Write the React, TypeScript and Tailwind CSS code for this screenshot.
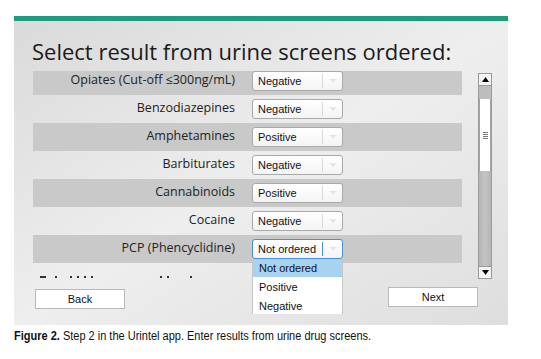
import React from "react";

const rows: { label: string; value: string; gray: boolean; active?: boolean }[] = [
  { label: "Opiates (Cut-off \u2264300ng/mL)", value: "Negative", gray: true },
  { label: "Benzodiazepines", value: "Negative", gray: false },
  { label: "Amphetamines", value: "Positive", gray: true },
  { label: "Barbiturates", value: "Negative", gray: false },
  { label: "Cannabinoids", value: "Positive", gray: true },
  { label: "Cocaine", value: "Negative", gray: false },
  { label: "PCP (Phencyclidine)", value: "Not ordered", gray: true, active: true },
];

function Select({ value, active }: { value: string; active?: boolean }) {
  return (
    <div
      className={
        "flex h-[20px] w-[91px] items-stretch rounded-[3px] border bg-gradient-to-b from-white to-[#f4f4f4] " +
        (active ? "border-[#4a8fd6]" : "border-[#a9a9a9]")
      }
    >
      <div className="flex flex-1 items-center pl-[5px] text-[11px] text-[#111] [font-family:'Liberation_Sans',Arial,sans-serif]">
        {value}
      </div>
      <div
        className={
          "my-[2px] w-px " + (active ? "bg-[#4a8fd6]" : "bg-[#d8d8d8]")
        }
      />
      <div className="flex w-[19px] items-center justify-center">
        <svg width="8" height="5" viewBox="0 0 8 5">
          <path d="M0 0 L8 0 L4 4 Z" fill="#e6e6e6" />
        </svg>
      </div>
    </div>
  );
}

export default function App() {
  return (
    <div className="relative h-[359px] w-[541px] bg-white [font-family:'Open_Sans','Noto_Sans',sans-serif]">
      <div className="w-[508px] pl-[14px] pt-[16px]">
        <div className="h-[5px] bg-[#1f9c7e]" />
        <div className="relative h-[304px] bg-gradient-to-br from-[#dadada] via-[#eeeeee] to-[#dedede]">
          <div className="pl-[18px] pt-[16px] text-[22px] leading-[28px] text-[#1a1a1a]">
            Select result from urine screens ordered:
          </div>
          <div className="mt-[6px] flex h-[208px]">
            <div className="relative ml-[19px] w-[429px] overflow-hidden">
              <div className="mt-[-4px]">
                {rows.map((r) => (
                  <div
                    key={r.label}
                    className={"flex h-[28px] items-center " + (r.gray ? "bg-[#c9c9c9]" : "")}
                  >
                    <div className="w-[202px] pb-[3px] text-right text-[12.5px] leading-[12px] text-[#222]">
                      {r.label}
                    </div>
                    <div className="ml-[17px]">
                      <Select value={r.value} active={r.active} />
                    </div>
                  </div>
                ))}
                <div className="flex h-[28px] items-center pl-[7px]">
                  <div className="flex items-center gap-[9px]">
                    <span className="h-[2px] w-[6px] bg-[#333]" />
                    <span className="h-[2px] w-[2px] bg-[#333]" />
                    <span className="ml-[4px] h-[2px] w-[2px] bg-[#333]" />
                    <span className="-ml-[4px] h-[2px] w-[2px] bg-[#333]" />
                    <span className="-ml-[4px] h-[2px] w-[2px] bg-[#333]" />
                    <span className="-ml-[4px] h-[2px] w-[2px] bg-[#333]" />
                    <span className="ml-[58px] h-[2px] w-[2px] bg-[#333]" />
                    <span className="-ml-[4px] h-[2px] w-[2px] bg-[#333]" />
                    <span className="ml-[12px] h-[2px] w-[2px] bg-[#333]" />
                  </div>
                </div>
              </div>
            </div>
            <div className="ml-[16px] mt-[2px] flex w-[14px] flex-col border border-[#9a9a9a] bg-[#bdbdbd]">
              <div className="flex h-[12px] items-center justify-center border-b border-[#9a9a9a] bg-[#f4f4f4]">
                <svg width="7" height="5" viewBox="0 0 7 5">
                  <path d="M3.5 0 L7 5 L0 5 Z" fill="#000" />
                </svg>
              </div>
              <div className="h-[13px]" />
              <div className="flex h-[72px] items-center justify-center border-x border-[#a5a5a5] bg-white">
                <div className="flex flex-col gap-[1px]">
                  <span className="h-px w-[5px] bg-[#777]" />
                  <span className="h-px w-[5px] bg-[#777]" />
                  <span className="h-px w-[5px] bg-[#777]" />
                  <span className="h-px w-[5px] bg-[#777]" />
                </div>
              </div>
              <div className="flex-1 bg-gradient-to-r from-[#b5b5b5] via-[#c4c4c4] to-[#b5b5b5]" />
              <div className="flex h-[12px] items-center justify-center border-t border-[#9a9a9a] bg-[#f4f4f4]">
                <svg width="7" height="5" viewBox="0 0 7 5">
                  <path d="M0 0 L7 0 L3.5 5 Z" fill="#000" />
                </svg>
              </div>
            </div>
          </div>
          <div className="flex items-start">
            <div className="ml-[21px] mt-[10px] flex h-[20px] w-[90px] items-center justify-center border border-[#b9b9b9] bg-white text-[11px] text-[#111] [font-family:'Liberation_Sans',Arial,sans-serif]">
              Back
            </div>
            <div className="ml-auto mr-[30px] mt-[8px] flex h-[20px] w-[90px] items-center justify-center border border-[#b9b9b9] bg-white text-[11px] text-[#111] [font-family:'Liberation_Sans',Arial,sans-serif]">
              Next
            </div>
          </div>

          <div className="absolute left-[238px] top-[238px] h-[55px] w-[91px] overflow-hidden border-x border-t border-[#c8c8c8] bg-white text-[11px] text-[#111] [font-family:'Liberation_Sans',Arial,sans-serif]">
            <div className="flex h-[17px] items-center bg-[#a7d3f1] pl-[6px]">Not ordered</div>
            <div className="flex h-[19px] flex-col justify-center pl-[6px]">
              <span className="pt-[3px]">Positive</span>
              <span className="ml-[2px] mt-[2px] h-px w-[78px] bg-[#d4d4d4]" />
            </div>
            <div className="flex h-[19px] flex-col justify-center pl-[6px]">
              <span className="pt-[3px]">Negative</span>
              <span className="ml-[2px] mt-[2px] h-px w-[78px] bg-[#d4d4d4]" />
            </div>
          </div>
        </div>
        <div className="mt-[3px] origin-left scale-x-[0.88] whitespace-nowrap text-[12.5px] leading-[16px] text-[#111] [font-family:'Liberation_Sans',Arial,sans-serif]">
          <span className="font-bold">Figure 2.</span> Step 2 in the Urintel app. Enter results from urine drug screens.
        </div>
      </div>
    </div>
  );
}
